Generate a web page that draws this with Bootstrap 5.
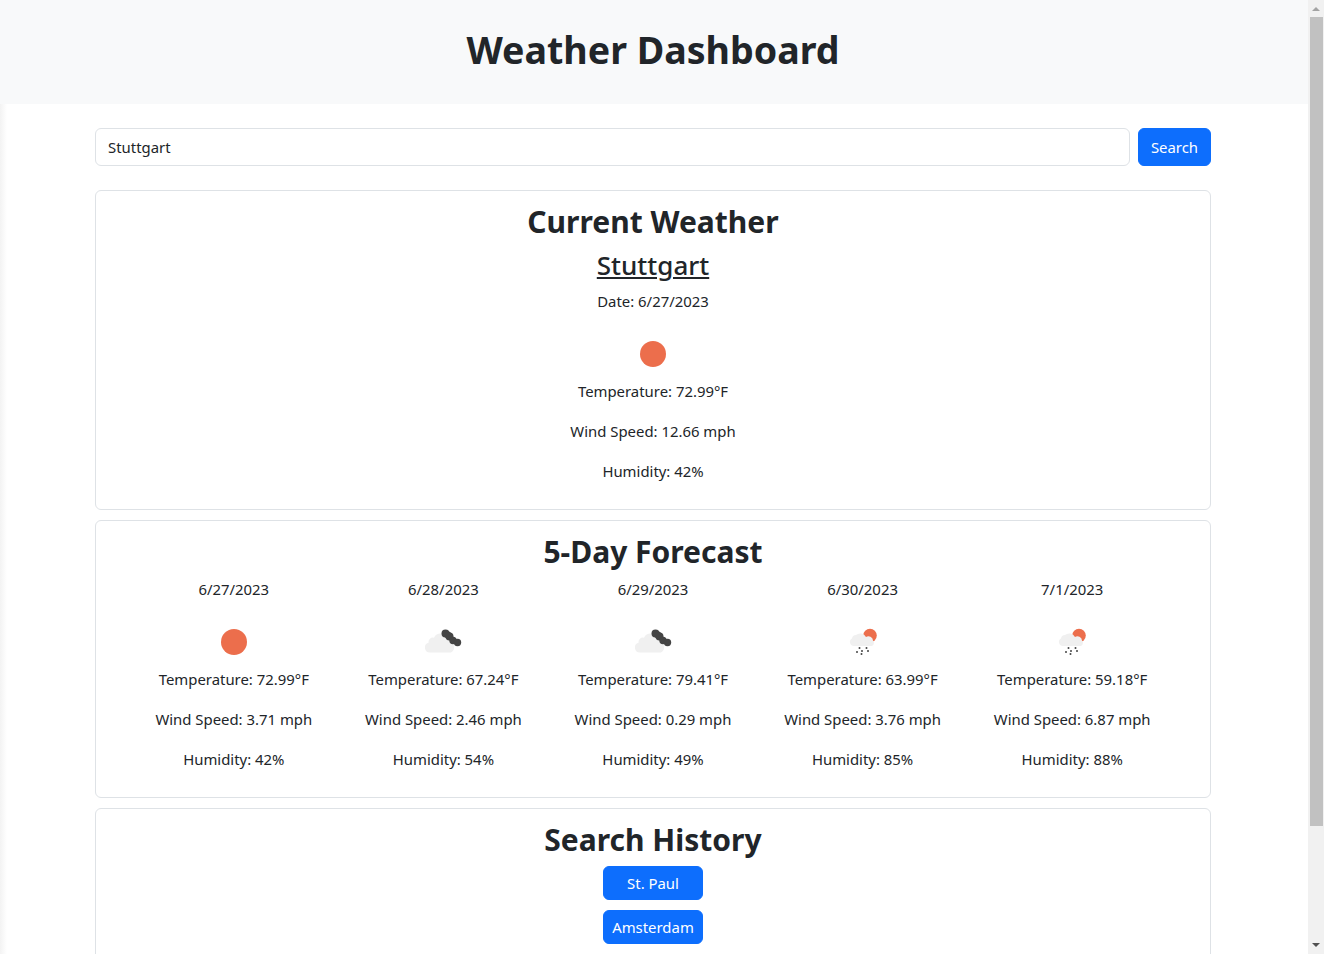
<!DOCTYPE html>
<html lang="en">
<head>
<meta charset="utf-8">
<title>Weather Dashboard</title>
<link href="https://cdn.jsdelivr.net/npm/bootstrap@5.3.0/dist/css/bootstrap.min.css" rel="stylesheet">
<style>
body{font-family:"Noto Sans",sans-serif;color:#212529;font-size:14.9px;line-height:24px}
.page-shell{height:954px}
.page-main{min-width:0;background:linear-gradient(90deg,#f3f3f3,#fff 7px)}
.hero-bar{background:#f8f9fa;padding:24px 0}
.hero-bar h1{font-size:37.6px;font-weight:700;line-height:52px;margin:0 0 4px}
.form-control,.btn{font-size:14.9px;line-height:24px}
.search-btn{width:73px;padding-left:0;padding-right:0}
.panel-box{border:1px solid #dee2e6;border-radius:6px;padding:10px;margin-bottom:10px;background:#fff}
.panel-box h2{font-size:30px;line-height:42.4px;font-weight:700;margin:0 0 4px}
.panel-box h3{font-size:26px;line-height:37.6px;font-weight:500;margin:0 0 4px;text-decoration:underline}
.panel-box p{margin:0 0 16px}
.wx-icon{display:block;margin:0 auto}
.day-row{padding:0 23px}
.hist-list{gap:10px;padding-bottom:40px}
.hist-btn{width:100px;padding:4px 0;line-height:24px}
.fake-bar{width:18px;flex:none;padding-left:2px;background:linear-gradient(#f8f9fa 104px,#fff 104px) left top/2px 100% no-repeat,#f1f1f1}
.fake-btn{height:17px}
.fake-thumb{height:809px;margin:0 1px 0 2px;background:#c1c1c1}
.fake-rest{flex:1}
</style>
</head>
<body>
<svg width="0" height="0" class="d-block" aria-hidden="true">
<symbol id="ic-sun" viewBox="0 0 50 50"><circle cx="25" cy="25" r="13" fill="#ec6e4c"/></symbol>
<symbol id="ic-cloud" viewBox="0 0 50 50"><path d="M12 35.5a5 5 0 0 1-1.5-9.8 4.5 4.5 0 0 1 5.500-5 7.500 7.500 0 0 1 14 1.500 6.500 6.500 0 0 1 6 6.500 6.500 6.500 0 0 1-3 6.800z" fill="#f0f0f0"/><g fill="#444"><circle cx="27.500" cy="16.500" r="4"/><circle cx="31.500" cy="19.500" r="4"/><circle cx="35" cy="23.500" r="3.700"/><circle cx="39.500" cy="25.500" r="3.700"/><circle cx="30" cy="18" r="3.500"/></g></symbol>
<symbol id="ic-rain" viewBox="0 0 50 50"><circle cx="32" cy="18.500" r="6.800" fill="#ec6e4c"/><path d="M16 29a4 4 0 0 1-2-7.500 4 4 0 0 1 4-3.500 6.500 6.500 0 0 1 10 2 4.500 4.500 0 0 1 7 3.500 3.500 3.500 0 0 1-1 5.500z" fill="#f0f0f0"/><g fill="#444"><circle cx="21.500" cy="31" r="1"/><circle cx="28.500" cy="31" r="1"/><circle cx="24" cy="34" r="1"/><circle cx="30" cy="34" r="1"/><circle cx="19" cy="35" r="1"/><circle cx="23.500" cy="37" r="1"/></g></symbol>
</svg>
<div class="d-flex page-shell overflow-hidden">
<div class="page-main flex-grow-1">
<header class="hero-bar text-center"><h1>Weather Dashboard</h1></header>
<main class="container mt-4">
<div class="d-flex gap-2 mb-4">
<input class="form-control" value="Stuttgart" aria-label="City">
<button class="btn btn-primary search-btn flex-shrink-0">Search</button>
</div>
<section class="panel-box text-center">
<h2>Current Weather</h2>
<h3>Stuttgart</h3>
<p>Date: 6/27/2023</p>
<svg class="wx-icon" width="50" height="50"><use href="#ic-sun"/></svg>
<p>Temperature: 72.99°F</p>
<p>Wind Speed: 12.66 mph</p>
<p>Humidity: 42%</p>
</section>
<section class="panel-box text-center">
<h2>5-Day Forecast</h2>
<div class="row g-0 day-row">
<div class="col"><p>6/27/2023</p><svg class="wx-icon" width="50" height="50"><use href="#ic-sun"/></svg><p>Temperature: 72.99°F</p><p>Wind Speed: 3.71 mph</p><p>Humidity: 42%</p></div>
<div class="col"><p>6/28/2023</p><svg class="wx-icon" width="50" height="50"><use href="#ic-cloud"/></svg><p>Temperature: 67.24°F</p><p>Wind Speed: 2.46 mph</p><p>Humidity: 54%</p></div>
<div class="col"><p>6/29/2023</p><svg class="wx-icon" width="50" height="50"><use href="#ic-cloud"/></svg><p>Temperature: 79.41°F</p><p>Wind Speed: 0.29 mph</p><p>Humidity: 49%</p></div>
<div class="col"><p>6/30/2023</p><svg class="wx-icon" width="50" height="50"><use href="#ic-rain"/></svg><p>Temperature: 63.99°F</p><p>Wind Speed: 3.76 mph</p><p>Humidity: 85%</p></div>
<div class="col"><p>7/1/2023</p><svg class="wx-icon" width="50" height="50"><use href="#ic-rain"/></svg><p>Temperature: 59.18°F</p><p>Wind Speed: 6.87 mph</p><p>Humidity: 88%</p></div>
</div>
</section>
<section class="panel-box text-center">
<h2>Search History</h2>
<div class="d-flex flex-column align-items-center hist-list">
<button class="btn btn-primary hist-btn">St. Paul</button>
<button class="btn btn-primary hist-btn">Amsterdam</button>
</div>
</section>
</main>
</div>
<div class="fake-bar d-flex flex-column" aria-hidden="true">
<svg class="fake-btn d-block" width="16" height="17" viewBox="0 0 16 17"><path d="M8 7 12 11H4z" fill="#a3a3a3"/></svg>
<div class="fake-thumb"></div>
<div class="fake-rest"></div>
<svg class="fake-btn d-block" width="16" height="17" viewBox="0 0 16 17"><path d="M4 6H12L8 10z" fill="#505050"/></svg>
</div>
</div>
</body>
</html>
